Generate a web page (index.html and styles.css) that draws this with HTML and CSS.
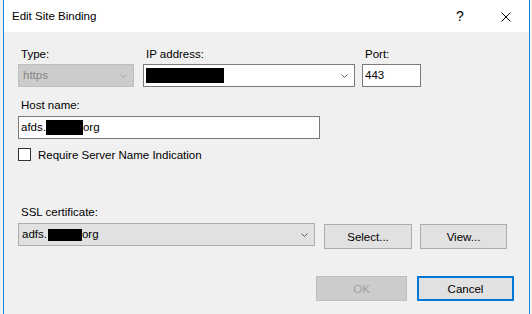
FILE: index.html
```html
<!DOCTYPE html>
<html lang="en">
<head>
    <meta charset="UTF-8">
    <title>Edit Site Binding</title>
    <link rel="stylesheet" href="styles.css">
</head>
<body>
    <div class="desktop">
        <div class="window">
            <div class="titlebar">
                <span class="title">Edit Site Binding</span>
                <span class="caption-btn help">?</span>
                <span class="caption-btn close">
                    <svg width="10" height="10" viewBox="0 0 10 10"><path d="M0.5 0.5 L9.5 9.5 M9.5 0.5 L0.5 9.5" stroke="#000" stroke-width="1"/></svg>
                </span>
            </div>
            <div class="content">
                <div class="top-row">
                    <div class="field type-field">
                        <div class="label">Type:</div>
                        <div class="combo disabled">
                            <span>https</span>
                            <svg class="chevron" width="7" height="4" viewBox="0 0 7 4"><path d="M0.5 0.5 L3.5 3.5 L6.5 0.5" fill="none" stroke="#a6a6a6"/></svg>
                        </div>
                    </div>
                    <div class="field ip-field">
                        <div class="label">IP address:</div>
                        <div class="combo white">
                            <span class="redact ip-redact"></span>
                            <svg class="chevron" width="7" height="4" viewBox="0 0 7 4"><path d="M0.5 0.5 L3.5 3.5 L6.5 0.5" fill="none" stroke="#606060"/></svg>
                        </div>
                    </div>
                    <div class="field port-field">
                        <div class="label">Port:</div>
                        <div class="textbox">443</div>
                    </div>
                </div>

                <div class="field host-field">
                    <div class="label">Host name:</div>
                    <div class="textbox">afds.<span class="redact host-redact"></span>org</div>
                </div>

                <div class="check">
                    <span class="box"></span>
                    <span>Require Server Name Indication</span>
                </div>

                <div class="field ssl-field">
                    <div class="label">SSL certificate:</div>
                    <div class="ssl-row">
                        <div class="combo cert">
                            <span>adfs.<span class="redact cert-redact"></span>org</span>
                            <svg class="chevron" width="7" height="4" viewBox="0 0 7 4"><path d="M0.5 0.5 L3.5 3.5 L6.5 0.5" fill="none" stroke="#606060"/></svg>
                        </div>
                        <button class="btn select-btn">Select...</button>
                        <button class="btn view-btn">View...</button>
                    </div>
                </div>

                <div class="actions">
                    <button class="btn ok-btn" disabled>OK</button>
                    <button class="btn cancel-btn">Cancel</button>
                </div>
            </div>
        </div>
    </div>
</body>
</html>
```

FILE: styles.css
```css
body {
    margin: 0;
    padding: 0;
    font-family: "Liberation Sans", Arial, sans-serif;
    font-size: 11.5px;
    color: #000;
    overflow: hidden;
}
.desktop {
    position: relative;
    width: 532px;
    height: 314px;
    background: #f2f2f2;
    overflow: hidden;
}
/* the dialog sits on the desktop, slightly off the top */
.window {
    position: absolute;
    left: 3px;
    top: -1px;
    width: 525px;
    height: 316px;
    border: 1px solid #1883d7;
    border-bottom: none;
    background: #f0f0f0;
}
.titlebar {
    display: flex;
    align-items: center;
    height: 32px;
    background: #fff;
}
.title {
    padding-left: 8px;
    flex: 1;
}
.caption-btn {
    width: 46px;
    height: 32px;
    display: flex;
    align-items: center;
    justify-content: center;
}
.help {
    font-size: 14px;
    padding-bottom: 1px;
    box-sizing: border-box;
}
.close {
    padding-top: 1px;
    box-sizing: border-box;
}
.content {
    padding: 14px 15px 0 14px;
}
.label {
    height: 16px;
    line-height: 16px;
    padding-left: 3px;
    margin-bottom: 2px;
}
.top-row {
    display: flex;
}
.type-field { width: 116px; }
.ip-field { width: 212px; margin-left: 9px; }
.port-field { width: 59px; margin-left: 7px; }

.combo, .textbox {
    box-sizing: border-box;
    height: 23px;
    line-height: 21px;
    display: flex;
    align-items: center;
    position: relative;
    white-space: nowrap;
}
.combo {
    justify-content: space-between;
    padding: 0 6px 0 4px;
}
.combo.disabled {
    background: #cccccc;
    border: 1px solid #bfbfbf;
    color: #838383;
}
.combo.white {
    background: #fff;
    border: 1px solid #7a7a7a;
    padding-left: 2px;
}
.combo.cert {
    background: #e1e1e1;
    border: 1px solid #adadad;
    width: 297px;
    padding-left: 3px;
}
.textbox {
    background: #fff;
    border: 1px solid #7a7a7a;
    padding-left: 2px;
}
.redact {
    display: inline-block;
    background: #000;
    vertical-align: middle;
}
.ip-redact { width: 78px; height: 15px; }
.host-redact { width: 37px; height: 15px; }
.cert-redact { width: 34px; height: 12px; margin-left: 1px; }

.host-field { margin-top: 10px; }
.host-field .label { margin-bottom: 3px; }
.host-field .textbox { width: 302px; }

.check {
    display: flex;
    align-items: center;
    margin-top: 9px;
    height: 13px;
}
.check .box {
    width: 13px;
    height: 13px;
    box-sizing: border-box;
    border: 1px solid #333;
    background: #fff;
    margin-right: 7px;
}

.ssl-field { margin-top: 43px; }
.ssl-field .label { margin-bottom: 3px; }
.ssl-row {
    display: flex;
    align-items: flex-start;
}
.btn {
    font-family: inherit;
    font-size: inherit;
    color: #000;
    height: 25px;
    box-sizing: border-box;
    background: #e1e1e1;
    border: 1px solid #adadad;
    border-radius: 0;
    padding: 0;
}
.select-btn { width: 88px; margin: 1px 0 0 9px; }
.view-btn { width: 87px; margin: 1px 0 0 8px; }

.actions {
    display: flex;
    justify-content: flex-end;
    margin-top: 27px;
}
.ok-btn {
    width: 91px;
    background: #cccccc;
    border-color: #bfbfbf;
    color: #a0a0a0;
}
.cancel-btn {
    width: 97px;
    margin-left: 10px;
    border: 2px solid #0078d7;
}
```
